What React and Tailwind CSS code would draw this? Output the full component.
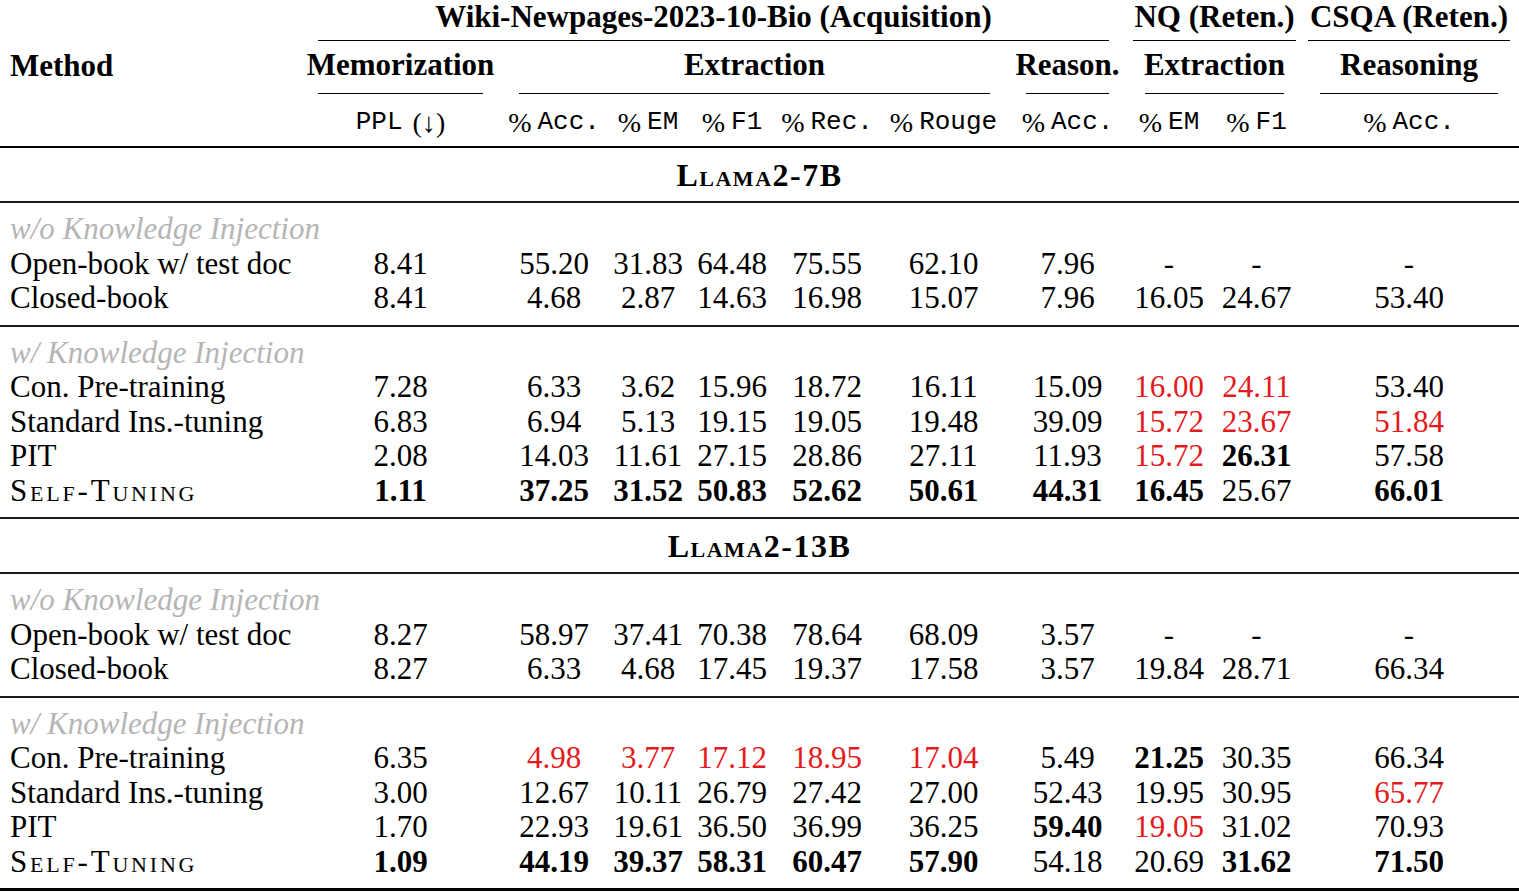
import React from "react";

const cols = "grid grid-cols-[300px_201px_106px_82px_86px_104px_129px_119px_84px_91px_214px]";

const blocks = [
  {
    model: ["L", "lama", "2-7B"],
    groups: [
      {
        label: "w/o Knowledge Injection",
        rows: [
          ["Open-book w/ test doc", "8.41", "55.20", "31.83", "64.48", "75.55", "62.10", "7.96", "-", "-", "-"],
          ["Closed-book", "8.41", "4.68", "2.87", "14.63", "16.98", "15.07", "7.96", "16.05", "24.67", "53.40"],
        ],
      },
      {
        label: "w/ Knowledge Injection",
        rows: [
          ["Con. Pre-training", "7.28", "6.33", "3.62", "15.96", "18.72", "16.11", "15.09", "16.00r", "24.11r", "53.40"],
          ["Standard Ins.-tuning", "6.83", "6.94", "5.13", "19.15", "19.05", "19.48", "39.09", "15.72r", "23.67r", "51.84r"],
          ["PIT", "2.08", "14.03", "11.61", "27.15", "28.86", "27.11", "11.93", "15.72r", "26.31b", "57.58"],
          ["SELF", "1.11b", "37.25b", "31.52b", "50.83b", "52.62b", "50.61b", "44.31b", "16.45b", "25.67", "66.01b"],
        ],
      },
    ],
  },
  {
    model: ["L", "lama", "2-13B"],
    groups: [
      {
        label: "w/o Knowledge Injection",
        rows: [
          ["Open-book w/ test doc", "8.27", "58.97", "37.41", "70.38", "78.64", "68.09", "3.57", "-", "-", "-"],
          ["Closed-book", "8.27", "6.33", "4.68", "17.45", "19.37", "17.58", "3.57", "19.84", "28.71", "66.34"],
        ],
      },
      {
        label: "w/ Knowledge Injection",
        rows: [
          ["Con. Pre-training", "6.35", "4.98r", "3.77r", "17.12r", "18.95r", "17.04r", "5.49", "21.25b", "30.35", "66.34"],
          ["Standard Ins.-tuning", "3.00", "12.67", "10.11", "26.79", "27.42", "27.00", "52.43", "19.95", "30.95", "65.77r"],
          ["PIT", "1.70", "22.93", "19.61", "36.50", "36.99", "36.25", "59.40b", "19.05r", "31.02", "70.93"],
          ["SELF", "1.09b", "44.19b", "39.37b", "58.31b", "60.47b", "57.90b", "54.18", "20.69", "31.62b", "71.50b"],
        ],
      },
    ],
  },
];

const Cell = ({ v }) => {
  if (v.endsWith("r")) return <div className="text-center text-[#e41a1c]">{v.slice(0, -1)}</div>;
  if (v.endsWith("b")) return <div className="text-center font-bold">{v.slice(0, -1)}</div>;
  return <div className="text-center">{v}</div>;
};

const Metric = ({ name }) => (
  <div className="flex items-center justify-center">
    <span className="text-[28px] font-['Liberation_Serif',serif]">%</span>
    <span className="ml-[6px] text-[26px] font-['Liberation_Mono',monospace]">{name}</span>
  </div>
);

const SelfTuning = () => (
  <span className="[font-variant:small-caps] tracking-[2.8px]">Self-Tuning</span>
);

const Rule = ({ cls }) => <div className={cls} />;

export default function App() {
  return (
    <div className="w-[1519px] h-[892px] bg-white text-black font-['Liberation_Serif',serif] overflow-hidden">
      {/* header row 1 */}
      <div className={`${cols} h-[41px] text-[31px] font-bold`}>
        <div />
        <div className="col-span-7 px-[18px]">
          <div className="h-[41px] border-b border-black text-center leading-[34.5px] whitespace-nowrap">Wiki-Newpages-2023-10-Bio (Acquisition)</div>
        </div>
        <div className="col-span-2 px-[18px]">
          <div className="h-[41px] border-b border-black text-center leading-[34.5px] whitespace-nowrap -mx-[12px]">NQ (Reten.)</div>
        </div>
        <div className="px-[18px]">
          <div className="h-[41px] border-b border-black text-center leading-[34.5px] whitespace-nowrap -mx-[12px]">CSQA (Reten.)</div>
        </div>
      </div>

      {/* header row 2 */}
      <div className={`${cols} h-[53px] text-[31px] font-bold`}>
        <div className="flex items-center pl-[10px] h-[50px]">Method</div>
        {[
          ["Memorization", "col-span-1"],
          ["Extraction", "col-span-5"],
          ["Reason.", "col-span-1"],
          ["Extraction", "col-span-2"],
          ["Reasoning", "col-span-1"],
        ].map(([t, span], i) => (
          <div key={i} className={`${span} px-[18px]`}>
            <div className="h-[53px] pb-[3px] border-b border-black flex items-center justify-center">
              <span className="whitespace-nowrap -mx-[20px]">{t}</span>
            </div>
          </div>
        ))}
      </div>

      {/* header row 3 */}
      <div className={`${cols} h-[52px] pt-[5px] items-center`}>
        <div />
        <div className="flex items-center justify-center">
          <span className="text-[26px] font-['Liberation_Mono',monospace]">PPL</span>
          <span className="ml-[10px] text-[28px]">(↓)</span>
        </div>
        <Metric name="Acc." />
        <Metric name="EM" />
        <Metric name="F1" />
        <Metric name="Rec." />
        <Metric name="Rouge" />
        <Metric name="Acc." />
        <Metric name="EM" />
        <Metric name="F1" />
        <Metric name="Acc." />
      </div>
      <Rule cls="h-[2px] bg-black" />

      {blocks.map((b, bi) => (
        <div key={bi}>
          <div className="h-[53px] flex items-center justify-center text-[32px] font-bold">
            <span className="tracking-[1.5px]">
              {b.model[0]}
              <span className="[font-variant:small-caps]">{b.model[1]}</span>
              {b.model[2]}
            </span>
          </div>
          <Rule cls="h-[2px] bg-[#1a1a1a]" />
          {b.groups.map((g, gi) => (
            <div key={gi}>
              <div className="py-[9px] text-[31px]">
                <div className="h-[34.5px] leading-[34.5px] pl-[10px] italic text-[#b5b5b5]">{g.label}</div>
                {g.rows.map((r, ri) => (
                  <div key={ri} className={`${cols} h-[34.5px] leading-[34.5px]`}>
                    <div className="pl-[10px] whitespace-nowrap">{r[0] === "SELF" ? <SelfTuning /> : r[0]}</div>
                    {r.slice(1).map((v, vi) => (
                      <Cell key={vi} v={v} />
                    ))}
                  </div>
                ))}
              </div>
              {!(bi === blocks.length - 1 && gi === b.groups.length - 1) && (
                <Rule cls="h-[2px] bg-[#1a1a1a]" />
              )}
            </div>
          ))}
        </div>
      ))}
      <Rule cls="h-[3px] bg-black" />
    </div>
  );
}
